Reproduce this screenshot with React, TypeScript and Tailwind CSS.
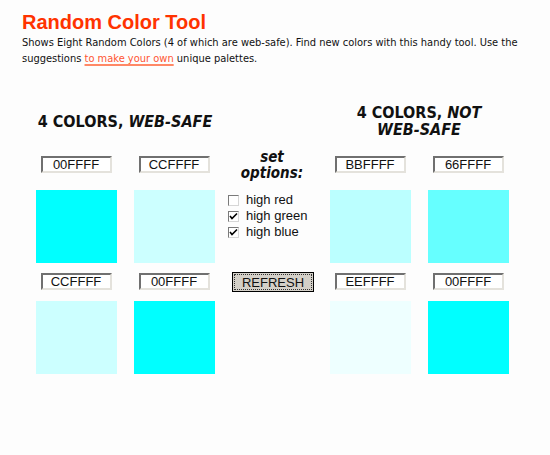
import { useState } from 'react';

// colours shown on first load
const initialSafe = ['00FFFF', 'CCFFFF', 'CCFFFF', '00FFFF'];
const initialOther = ['BBFFFF', '66FFFF', 'EEFFFF', '00FFFF'];

const safeSteps = ['00', '33', '66', '99', 'CC', 'FF'];

function randomChannel(high: boolean, webSafe: boolean): string {
  if (high) return 'FF';
  if (webSafe) return safeSteps[Math.floor(Math.random() * safeSteps.length)];
  return Math.floor(Math.random() * 256).toString(16).toUpperCase().padStart(2, '0');
}

function HexBox({ value }: { value: string }) {
  return (
    <div className="mt-[19px] justify-self-center w-[71px] h-[17px] bg-white border-2 border-t-[#707070] border-l-[#707070] border-b-[#e4e2dc] border-r-[#e4e2dc] text-center text-[13px] leading-[13px] text-[#111] font-['Liberation_Sans',Arial,sans-serif]">
      {value}
    </div>
  );
}

function Swatch({ color }: { color: string }) {
  return <div className="justify-self-center w-[81px] h-[73px]" style={{ backgroundColor: '#' + color }} />;
}

function Check({ checked, label, onClick }: { checked: boolean; label: string; onClick: () => void }) {
  return (
    <div className="flex items-center h-[16px] cursor-pointer" onClick={onClick}>
      <span className="w-[11px] h-[11px] bg-white border border-t-[#7a7a7a] border-l-[#7a7a7a] border-b-[#d6d6d6] border-r-[#d6d6d6] flex items-center justify-center">
        {checked && (
          <svg width="9" height="9" viewBox="0 0 9 9">
            <path d="M1 4 L3 6.5 L8 1.5" stroke="#000" strokeWidth="1.6" fill="none" />
          </svg>
        )}
      </span>
      <span className="ml-[7px] text-[13px] text-[#111] font-['Liberation_Sans',Arial,sans-serif]">{label}</span>
    </div>
  );
}

export default function App() {
  const [safe, setSafe] = useState(initialSafe);
  const [other, setOther] = useState(initialOther);
  const [highRed, setHighRed] = useState(false);
  const [highGreen, setHighGreen] = useState(true);
  const [highBlue, setHighBlue] = useState(true);

  const refresh = () => {
    const make = (webSafe: boolean) =>
      randomChannel(highRed, webSafe) + randomChannel(highGreen, webSafe) + randomChannel(highBlue, webSafe);
    setSafe([make(true), make(true), make(true), make(true)]);
    setOther([make(false), make(false), make(false), make(false)]);
  };

  return (
    <div className="min-h-screen bg-[#fdfdfd] pl-[22px] pt-[11px]">
      <h1 className="text-[20px] leading-[23px] font-bold text-[#ff3300] font-['Liberation_Sans',Arial,sans-serif]">
        Random Color Tool
      </h1>
      <p className="mt-[1px] w-[512px] text-[11px] leading-[16px] text-[#111] font-['DejaVu_Sans_Condensed','DejaVu_Sans',sans-serif]">
        Shows Eight Random Colors (4 of which are web-safe). Find new colors with this handy tool. Use the suggestions{' '}
        <a href="#" className="text-[#ff5533] underline decoration-[#ff8866] decoration-2 underline-offset-2">
          to make your own
        </a>{' '}
        unique palettes.
      </p>

      {/* colour table */}
      <div className="ml-[5px] mt-[38px] grid grid-cols-[repeat(5,98px)] grid-rows-[32px_53px_74px_37px_73px]">
        <div className="col-span-2 flex items-center justify-center text-[16px] leading-[17px] font-bold text-[#111] font-['DejaVu_Sans_Condensed','DejaVu_Sans',sans-serif]">
          4 COLORS,&nbsp;<i>WEB-SAFE</i>
        </div>
        <div />
        <div className="col-span-2 flex items-center justify-center text-center text-[16px] leading-[17px] font-bold text-[#111] font-['DejaVu_Sans_Condensed','DejaVu_Sans',sans-serif]">
          <span>
            4 COLORS, <i>NOT</i>
            <br />
            <i>WEB-SAFE</i>
          </span>
        </div>

        <HexBox value={safe[0]} />
        <HexBox value={safe[1]} />
        <div className="mt-[12px] text-center text-[15px] leading-[16px] font-bold italic text-[#111] font-['DejaVu_Sans_Condensed','DejaVu_Sans',sans-serif]">
          set
          <br />
          options:
        </div>
        <HexBox value={other[0]} />
        <HexBox value={other[1]} />

        <Swatch color={safe[0]} />
        <Swatch color={safe[1]} />
        <div className="mt-[2px] pl-[5px] flex flex-col">
          <Check checked={highRed} label="high red" onClick={() => setHighRed(!highRed)} />
          <Check checked={highGreen} label="high green" onClick={() => setHighGreen(!highGreen)} />
          <Check checked={highBlue} label="high blue" onClick={() => setHighBlue(!highBlue)} />
        </div>
        <Swatch color={other[0]} />
        <Swatch color={other[1]} />

        <div className="-mt-[10px]">
          <HexBox value={safe[2]} />
        </div>
        <div className="-mt-[10px]">
          <HexBox value={safe[3]} />
        </div>
        <div className="mt-[8px] pl-[9px] flex items-start">
          <button
            type="button"
            onClick={refresh}
            className="block w-[82px] h-[20px] bg-[#d4d0c8] border border-black p-[1px]"
          >
            <span className="flex h-full w-full items-center justify-center border border-dotted border-[#333] text-[13px] leading-[13px] text-[#111] font-['Liberation_Sans',Arial,sans-serif]">
              REFRESH
            </span>
          </button>
        </div>
        <div className="-mt-[10px]">
          <HexBox value={other[2]} />
        </div>
        <div className="-mt-[10px]">
          <HexBox value={other[3]} />
        </div>

        <Swatch color={safe[2]} />
        <Swatch color={safe[3]} />
        <div />
        <Swatch color={other[2]} />
        <Swatch color={other[3]} />
      </div>
    </div>
  );
}
